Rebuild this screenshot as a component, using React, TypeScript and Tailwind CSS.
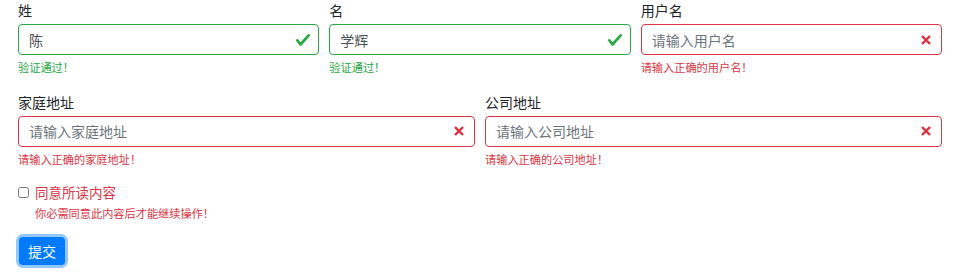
import React from 'react'

const font = { fontFamily: '"Noto Sans CJK SC", "Microsoft YaHei", sans-serif' }

function CheckIcon() {
  return (
    <svg viewBox="0 0 8 8" className="absolute right-2 top-1/2 h-4 w-4 -translate-y-1/2" fill="#28a745">
      <path d="M2.3 6.73L.6 4.53c-.4-1.04.46-1.4 1.1-.8l1.1 1.4 3.4-3.8c.6-.63 1.6-.27 1.2.7l-4 4.6c-.43.5-.8.4-1.1.1z" />
    </svg>
  )
}

function CrossIcon() {
  return (
    <svg viewBox="-2 -2 7 7" className="absolute right-2 top-1/2 h-4 w-4 -translate-y-1/2" fill="#dc3545">
      <path stroke="#dc3545" d="M0 0l3 3m0-3L0 3" />
      <circle r=".5" />
      <circle cx="3" r=".5" />
      <circle cy="3" r=".5" />
      <circle cx="3" cy="3" r=".5" />
    </svg>
  )
}

interface FieldProps {
  label: string
  value?: string
  placeholder: string
  valid: boolean
  message: string
}

function Field({ label, value, placeholder, valid, message }: FieldProps) {
  return (
    <div>
      <label className="block h-[21px] text-[14px] leading-[21px] text-[#212529]">{label}</label>
      <div className="relative mt-[3px]">
        <input
          type="text"
          defaultValue={value}
          placeholder={placeholder}
          className={
            'block h-[31px] w-full rounded-[4px] border bg-white pl-[10px] pr-7 text-[14px] text-[#495057] outline-none placeholder:text-[#6c757d] ' +
            (valid ? 'border-[#28a745]' : 'border-[#dc3545]')
          }
        />
        {valid ? <CheckIcon /> : <CrossIcon />}
      </div>
      <div
        className={
          'mt-1 text-[11.2px] leading-[16.8px] ' + (valid ? 'text-[#28a745]' : 'text-[#dc3545]')
        }
      >
        {message}
      </div>
    </div>
  )
}

export default function App() {
  return (
    <div className="min-h-[279px] bg-white pl-[18px] pr-[21px]" style={font}>
      <form onSubmit={(e) => e.preventDefault()}>
        {/* Name row */}
        <div className="grid grid-cols-3 gap-x-[10px]">
          <Field label="姓" value="陈" placeholder="请输入姓" valid message="验证通过！" />
          <Field label="名" value="学辉" placeholder="请输入名" valid message="验证通过！" />
          <Field label="用户名" placeholder="请输入用户名" valid={false} message="请输入正确的用户名！" />
        </div>

        {/* Address row */}
        <div className="mt-4 grid grid-cols-2 gap-x-[10px]">
          <Field label="家庭地址" placeholder="请输入家庭地址" valid={false} message="请输入正确的家庭地址！" />
          <Field label="公司地址" placeholder="请输入公司地址" valid={false} message="请输入正确的公司地址！" />
        </div>

        {/* Agreement */}
        <div className="mt-[14px]">
          <label className="flex items-center text-[13.5px] leading-[21px] text-[#dc3545]">
            <input type="checkbox" className="m-0 h-[11px] w-[11px]" />
            <span className="ml-[6px]">同意所读内容</span>
          </label>
          <div className="mt-[2px] pl-[17px] text-[11.2px] leading-[16.8px] text-[#dc3545]">
            你必需同意此内容后才能继续操作！
          </div>
        </div>

        {/* Submit */}
        <button
          type="submit"
          className="mt-[16px] ml-px flex h-[28px] items-center rounded-[4px] bg-[#007bff] px-[9px] text-[14px] text-white shadow-[0_0_0_3px_rgba(38,143,255,0.5)]"
        >
          提交
        </button>
      </form>
    </div>
  )
}
